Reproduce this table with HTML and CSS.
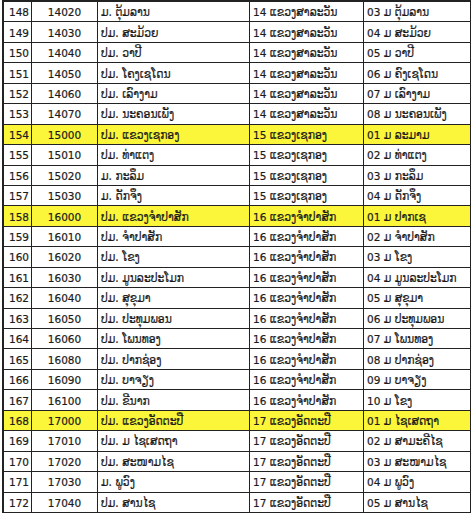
FILE: index.html
```html
<!DOCTYPE html>
<html lang="lo">
<head>
<meta charset="utf-8">
<title>ລະຫັດໄປສະນີ</title>
<link rel="stylesheet" href="styles.css">
</head>
<body>
<div class="sheet">
  <div class="row"><div class="no">148</div><div class="code">14020</div><div><span class="lo">ມ. ຕຸ້ມລານ</span></div><div>14&nbsp;<span class="lo">ແຂວງສາລະວັນ</span></div><div>03&nbsp;<span class="lo">ມ ຕຸ້ມລານ</span></div></div>
  <div class="row"><div class="no">149</div><div class="code">14030</div><div><span class="lo">ປມ. ສະມ້ວຍ</span></div><div>14&nbsp;<span class="lo">ແຂວງສາລະວັນ</span></div><div>04&nbsp;<span class="lo">ມ ສະມ້ວຍ</span></div></div>
  <div class="row"><div class="no">150</div><div class="code">14040</div><div><span class="lo">ປມ. ວາປີ</span></div><div>14&nbsp;<span class="lo">ແຂວງສາລະວັນ</span></div><div>05&nbsp;<span class="lo">ມ ວາປີ</span></div></div>
  <div class="row"><div class="no">151</div><div class="code">14050</div><div><span class="lo">ປມ. ໂຄງເຊໂດນ</span></div><div>14&nbsp;<span class="lo">ແຂວງສາລະວັນ</span></div><div>06&nbsp;<span class="lo">ມ ຄົງເຊໂດນ</span></div></div>
  <div class="row"><div class="no">152</div><div class="code">14060</div><div><span class="lo">ປມ. ເລົາງາມ</span></div><div>14&nbsp;<span class="lo">ແຂວງສາລະວັນ</span></div><div>07&nbsp;<span class="lo">ມ ເລົາງາມ</span></div></div>
  <div class="row"><div class="no">153</div><div class="code">14070</div><div><span class="lo">ປມ. ນະຄອນເພັງ</span></div><div>14&nbsp;<span class="lo">ແຂວງສາລະວັນ</span></div><div>08&nbsp;<span class="lo">ມ ນະຄອນເພັງ</span></div></div>
  <div class="row hl"><div class="no">154</div><div class="code">15000</div><div><span class="lo">ປມ. ແຂວງເຊກອງ</span></div><div>15&nbsp;<span class="lo">ແຂວງເຊກອງ</span></div><div>01&nbsp;<span class="lo">ມ ລະມາມ</span></div></div>
  <div class="row"><div class="no">155</div><div class="code">15010</div><div><span class="lo">ປມ. ທ່າແຕງ</span></div><div>15&nbsp;<span class="lo">ແຂວງເຊກອງ</span></div><div>02&nbsp;<span class="lo">ມ ທ່າແຕງ</span></div></div>
  <div class="row"><div class="no">156</div><div class="code">15020</div><div><span class="lo">ມ. ກະລຶມ</span></div><div>15&nbsp;<span class="lo">ແຂວງເຊກອງ</span></div><div>03&nbsp;<span class="lo">ມ ກະລຶມ</span></div></div>
  <div class="row"><div class="no">157</div><div class="code">15030</div><div><span class="lo">ມ. ດັກຈຶງ</span></div><div>15&nbsp;<span class="lo">ແຂວງເຊກອງ</span></div><div>04&nbsp;<span class="lo">ມ ດັກຈຶງ</span></div></div>
  <div class="row hl"><div class="no">158</div><div class="code">16000</div><div><span class="lo">ປມ. ແຂວງຈຳປາສັກ</span></div><div>16&nbsp;<span class="lo">ແຂວງຈຳປາສັກ</span></div><div>01&nbsp;<span class="lo">ມ ປາກເຊ</span></div></div>
  <div class="row"><div class="no">159</div><div class="code">16010</div><div><span class="lo">ປມ. ຈຳປາສັກ</span></div><div>16&nbsp;<span class="lo">ແຂວງຈຳປາສັກ</span></div><div>02&nbsp;<span class="lo">ມ ຈຳປາສັກ</span></div></div>
  <div class="row"><div class="no">160</div><div class="code">16020</div><div><span class="lo">ປມ. ໂຂງ</span></div><div>16&nbsp;<span class="lo">ແຂວງຈຳປາສັກ</span></div><div>03&nbsp;<span class="lo">ມ ໂຂງ</span></div></div>
  <div class="row"><div class="no">161</div><div class="code">16030</div><div><span class="lo">ປມ. ມູນລະປະໂມກ</span></div><div>16&nbsp;<span class="lo">ແຂວງຈຳປາສັກ</span></div><div>04&nbsp;<span class="lo">ມ ມູນລະປະໂມກ</span></div></div>
  <div class="row"><div class="no">162</div><div class="code">16040</div><div><span class="lo">ປມ. ສຸຂຸມາ</span></div><div>16&nbsp;<span class="lo">ແຂວງຈຳປາສັກ</span></div><div>05&nbsp;<span class="lo">ມ ສຸຂຸມາ</span></div></div>
  <div class="row"><div class="no">163</div><div class="code">16050</div><div><span class="lo">ປມ. ປະທຸມພອນ</span></div><div>16&nbsp;<span class="lo">ແຂວງຈຳປາສັກ</span></div><div>06&nbsp;<span class="lo">ມ ປະທຸມພອນ</span></div></div>
  <div class="row"><div class="no">164</div><div class="code">16060</div><div><span class="lo">ປມ. ໂພນທອງ</span></div><div>16&nbsp;<span class="lo">ແຂວງຈຳປາສັກ</span></div><div>07&nbsp;<span class="lo">ມ ໂພນທອງ</span></div></div>
  <div class="row"><div class="no">165</div><div class="code">16080</div><div><span class="lo">ປມ. ປາກຊ່ອງ</span></div><div>16&nbsp;<span class="lo">ແຂວງຈຳປາສັກ</span></div><div>08&nbsp;<span class="lo">ມ ປາກຊ່ອງ</span></div></div>
  <div class="row"><div class="no">166</div><div class="code">16090</div><div><span class="lo">ປມ. ບາຈຽງ</span></div><div>16&nbsp;<span class="lo">ແຂວງຈຳປາສັກ</span></div><div>09&nbsp;<span class="lo">ມ ບາຈຽງ</span></div></div>
  <div class="row"><div class="no">167</div><div class="code">16100</div><div><span class="lo">ປມ. ຂີນາກ</span></div><div>16&nbsp;<span class="lo">ແຂວງຈຳປາສັກ</span></div><div>10&nbsp;<span class="lo">ມ ໂຂງ</span></div></div>
  <div class="row hl"><div class="no">168</div><div class="code">17000</div><div><span class="lo">ປມ. ແຂວງອັດຕະປື</span></div><div>17&nbsp;<span class="lo">ແຂວງອັດຕະປື</span></div><div>01&nbsp;<span class="lo">ມ ໄຊເສດຖາ</span></div></div>
  <div class="row"><div class="no">169</div><div class="code">17010</div><div><span class="lo">ປມ. ມ ໄຊເສດຖາ</span></div><div>17&nbsp;<span class="lo">ແຂວງອັດຕະປື</span></div><div>02&nbsp;<span class="lo">ມ ສາມະຄີໄຊ</span></div></div>
  <div class="row"><div class="no">170</div><div class="code">17020</div><div><span class="lo">ປມ. ສະໜາມໄຊ</span></div><div>17&nbsp;<span class="lo">ແຂວງອັດຕະປື</span></div><div>03&nbsp;<span class="lo">ມ ສະໜາມໄຊ</span></div></div>
  <div class="row"><div class="no">171</div><div class="code">17030</div><div><span class="lo">ມ. ພູວົງ</span></div><div>17&nbsp;<span class="lo">ແຂວງອັດຕະປື</span></div><div>04&nbsp;<span class="lo">ມ ພູວົງ</span></div></div>
  <div class="row"><div class="no">172</div><div class="code">17040</div><div><span class="lo">ປມ. ສານໄຊ</span></div><div>17&nbsp;<span class="lo">ແຂວງອັດຕະປື</span></div><div>05&nbsp;<span class="lo">ມ ສານໄຊ</span></div></div>
</div>
</body>
</html>
```

FILE: styles.css
```css
html, body {
  margin: 0;
  padding: 0;
  background: #ffffff;
}

body {
  font-family: "DejaVu Sans", "Liberation Sans", sans-serif;
  font-size: 10.5px;
  color: #1c1c1c;
  -webkit-text-stroke: 0.2px #1c1c1c;
}

.sheet {
  display: grid;
  grid-template-columns: 28px 66px 152px 114px 107px;
  grid-auto-rows: 20.44px;
  width: max-content;
  margin-left: 2px;
  border-top: 2px solid #222222;
  border-left: 2px solid #222222;
}

.row {
  display: contents;
}

.row > div {
  display: flex;
  align-items: center;
  padding: 1px 3px 0 3px;
  white-space: nowrap;
  overflow: hidden;
  border-right: 1.5px solid #222222;
  border-bottom: 1.5px solid #222222;
  background: #ffffff;
}

.row.hl > div {
  background: #fbf63a;
}

.row > .no {
  justify-content: flex-end;
  padding-right: 2px;
}

.row > .code {
  justify-content: center;
}

.lo {
  font-family: "DejaVu Sans Condensed", "DejaVu Sans", sans-serif;
  font-size: 12px;
  line-height: 1;
}
```
